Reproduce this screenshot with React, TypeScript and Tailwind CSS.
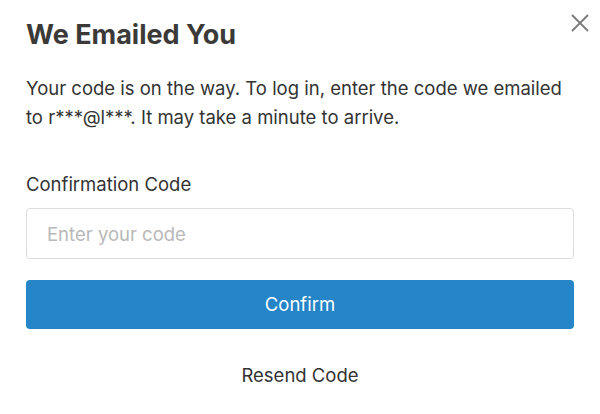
import React from "react";

export default function App() {
  return (
    <div
      className="relative w-[600px] h-[414px] bg-white px-[26px] text-[#333333]"
      style={{ fontFamily: 'Inter, "Liberation Sans", Arial, sans-serif' }}
    >
      <button
        className="absolute right-[9px] top-[12px] w-[22px] h-[22px] flex items-center justify-center"
        aria-label="Close"
      >
        <svg width="18" height="18" viewBox="0 0 18 18" fill="none">
          <path d="M1 1L17 17M17 1L1 17" stroke="#7a7a7a" strokeWidth="1.8" />
        </svg>
      </button>
      <h2 className="pt-[17px] text-[27px] leading-[36px] font-bold text-[#3b3a38]">
        We Emailed You
      </h2>
      <p className="mt-[21px] text-[18.5px] leading-[29px] text-[#333333]">
        Your code is on the way. To log in, enter the code we emailed
        <br />
        to r***@l***. It may take a minute to arrive.
      </p>
      <label className="block mt-[40px] text-[18.5px] leading-[24px] text-[#333333]">
        Confirmation Code
      </label>
      <input
        className="mt-[12px] block w-full h-[51px] border border-[#dcdcdc] rounded-[4px] px-[20px] text-[18.5px] placeholder:text-[#b8b8b8] outline-none"
        placeholder="Enter your code"
      />
      <button className="mt-[21px] w-full h-[49px] rounded-[4px] bg-[#2585c7] text-white text-[18.5px]">
        Confirm
      </button>
      <div className="mt-[34px] text-center text-[18.5px] leading-[24px] text-[#333333]">
        Resend Code
      </div>
    </div>
  );
}
